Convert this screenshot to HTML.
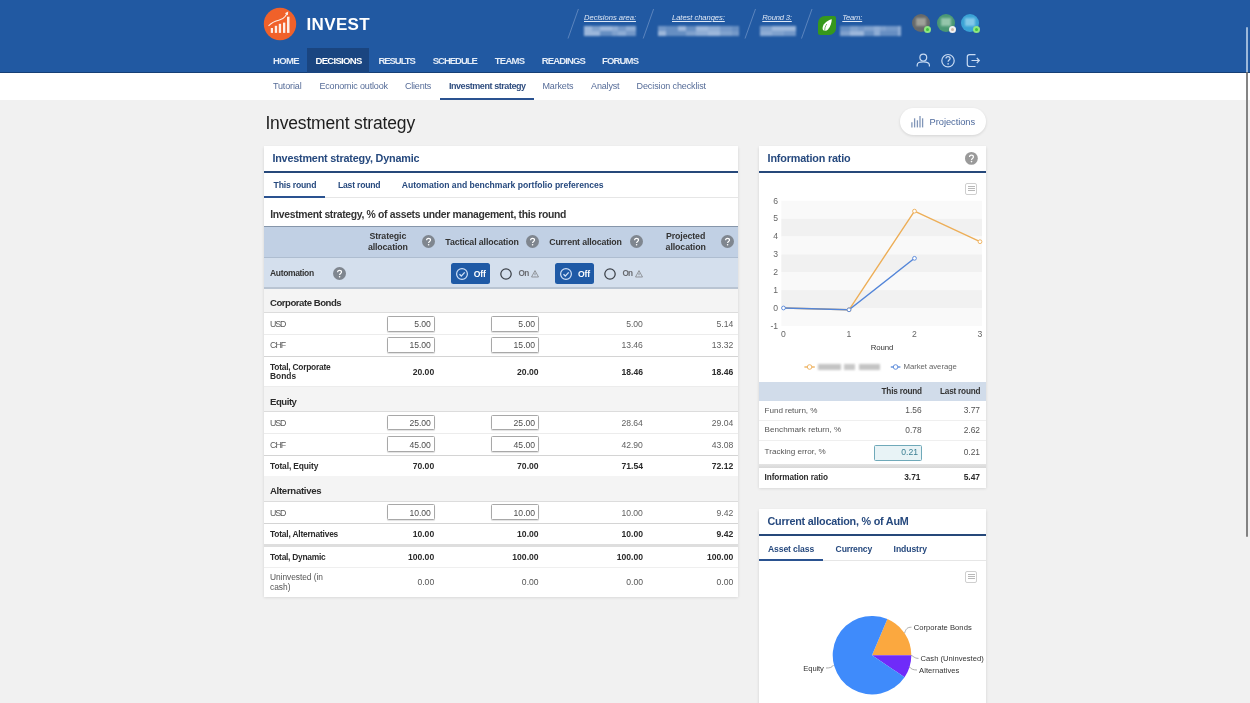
<!DOCTYPE html>
<html><head><meta charset="utf-8"><title>Investment strategy</title>
<style>
html,body{margin:0;padding:0}
body{width:1250px;height:703px;overflow:hidden;position:relative;background:#f1f1f1;font-family:"Liberation Sans",sans-serif}
.t{position:absolute;line-height:1;white-space:nowrap}
.b{position:absolute}
.wrap{position:absolute;left:0;top:0;width:1250px;height:703px;overflow:hidden;will-change:transform}
</style></head><body>
<div class="wrap">
<div class="b" style="left:0px;top:0px;width:1250px;height:72px;background:#2159a2"></div>
<div class="b" style="left:0px;top:72px;width:1250px;height:1px;background:#163f75"></div>
<div class="b" style="left:0px;top:73px;width:1250px;height:27px;background:#fff"></div>
<svg class="b" style="left:263px;top:7px" width="34" height="34" viewBox="0 0 34 34">
<circle cx="17" cy="17" r="16.2" fill="#f0612a"/>
<g fill="#fdeee6"><rect x="7.8" y="21" width="2.2" height="4.9"/><rect x="11.8" y="18.8" width="2.3" height="7.1"/><rect x="15.8" y="16.8" width="2.3" height="9.1"/><rect x="20" y="15.6" width="2.3" height="10.3"/><rect x="24" y="9.7" width="2.5" height="16.2"/></g>
<path d="M5.5 18.8 C9 15.5 11.5 14 15.8 13.2 C19 12.6 20.8 11.5 22.3 9.3 L24.6 5.6" stroke="#fdeee6" stroke-width="1.1" fill="none"/>
<path d="M25.2 4.6 L21.9 6.2 L24.9 8.2 Z" fill="#fdeee6"/>
</svg>
<div class="t" style="top:16.21px;font-size:17px;color:#ffffff;font-weight:bold;letter-spacing:0.350px;left:306.50px;">INVEST</div>
<div class="b" style="left:307px;top:48px;width:62px;height:24.5px;background:#1a4580"></div>
<div class="t" style="top:56.06px;font-size:9.5px;color:#e4ecf7;font-weight:bold;letter-spacing:-0.625px;left:273.00px;">HOME</div>
<div class="t" style="top:56.06px;font-size:9.5px;color:#ffffff;font-weight:bold;letter-spacing:-0.684px;left:315.50px;">DECISIONS</div>
<div class="t" style="top:56.06px;font-size:9.5px;color:#e4ecf7;font-weight:bold;letter-spacing:-1.019px;left:378.40px;">RESULTS</div>
<div class="t" style="top:56.06px;font-size:9.5px;color:#e4ecf7;font-weight:bold;letter-spacing:-1.032px;left:432.80px;">SCHEDULE</div>
<div class="t" style="top:56.06px;font-size:9.5px;color:#e4ecf7;font-weight:bold;letter-spacing:-0.770px;left:494.80px;">TEAMS</div>
<div class="t" style="top:56.06px;font-size:9.5px;color:#e4ecf7;font-weight:bold;letter-spacing:-0.868px;left:541.80px;">READINGS</div>
<div class="t" style="top:56.06px;font-size:9.5px;color:#e4ecf7;font-weight:bold;letter-spacing:-0.827px;left:602.00px;">FORUMS</div>
<svg class="b" style="left:0;top:0" width="1250" height="72"><g stroke="#6f93c6" stroke-width="1" opacity="0.75"><line x1="578.4" y1="9" x2="568" y2="38.5"/><line x1="653.6" y1="9" x2="643.2" y2="38.5"/><line x1="755.5" y1="9" x2="745" y2="38.5"/><line x1="812" y1="9" x2="801.5" y2="38.5"/></g></svg>
<div class="t" style="top:14.07px;font-size:7.6px;color:#dfe8f5;font-style:italic;letter-spacing:-0.025px;left:584.00px;text-decoration:underline;">Decisions area:</div>
<div class="t" style="top:14.07px;font-size:7.6px;color:#dfe8f5;font-style:italic;letter-spacing:-0.057px;left:672.00px;text-decoration:underline;">Latest changes:</div>
<div class="t" style="top:14.07px;font-size:7.6px;color:#dfe8f5;font-style:italic;letter-spacing:-0.168px;left:762.30px;text-decoration:underline;">Round 3:</div>
<div class="t" style="top:14.07px;font-size:7.6px;color:#dfe8f5;font-style:italic;letter-spacing:-0.188px;left:842.30px;text-decoration:underline;">Team:</div>
<div class="b" style="left:0;top:0;width:1250px;height:72px;filter:blur(1px)">
<div class="b" style="left:584px;top:26px;width:8px;height:5px;background:rgba(215,228,246,0.68)"></div>
<div class="b" style="left:584px;top:31px;width:8px;height:5px;background:rgba(215,228,246,0.68)"></div>
<div class="b" style="left:592px;top:26px;width:8px;height:5px;background:rgba(215,228,246,0.52)"></div>
<div class="b" style="left:592px;top:31px;width:8px;height:5px;background:rgba(215,228,246,0.68)"></div>
<div class="b" style="left:600px;top:26px;width:12px;height:5px;background:rgba(215,228,246,0.68)"></div>
<div class="b" style="left:600px;top:31px;width:12px;height:5px;background:rgba(215,228,246,0.38)"></div>
<div class="b" style="left:612px;top:26px;width:6px;height:5px;background:rgba(215,228,246,0.6)"></div>
<div class="b" style="left:612px;top:31px;width:6px;height:5px;background:rgba(215,228,246,0.52)"></div>
<div class="b" style="left:618px;top:26px;width:8px;height:5px;background:rgba(215,228,246,0.45)"></div>
<div class="b" style="left:618px;top:31px;width:8px;height:5px;background:rgba(215,228,246,0.6)"></div>
<div class="b" style="left:626px;top:26px;width:10px;height:5px;background:rgba(215,228,246,0.6)"></div>
<div class="b" style="left:626px;top:31px;width:10px;height:5px;background:rgba(215,228,246,0.45)"></div>
<div class="b" style="left:658.4px;top:26px;width:8.0px;height:5px;background:rgba(215,228,246,0.45)"></div>
<div class="b" style="left:658.4px;top:31px;width:8.0px;height:5px;background:rgba(215,228,246,0.68)"></div>
<div class="b" style="left:666.4px;top:26px;width:12.0px;height:5px;background:rgba(215,228,246,0.38)"></div>
<div class="b" style="left:666.4px;top:31px;width:12.0px;height:5px;background:rgba(215,228,246,0.38)"></div>
<div class="b" style="left:678.4px;top:26px;width:8.0px;height:5px;background:rgba(215,228,246,0.68)"></div>
<div class="b" style="left:678.4px;top:31px;width:8.0px;height:5px;background:rgba(215,228,246,0.38)"></div>
<div class="b" style="left:686.4px;top:26px;width:10.0px;height:5px;background:rgba(215,228,246,0.38)"></div>
<div class="b" style="left:686.4px;top:31px;width:10.0px;height:5px;background:rgba(215,228,246,0.52)"></div>
<div class="b" style="left:696.4px;top:26px;width:12.0px;height:5px;background:rgba(215,228,246,0.68)"></div>
<div class="b" style="left:696.4px;top:31px;width:12.0px;height:5px;background:rgba(215,228,246,0.6)"></div>
<div class="b" style="left:708.4px;top:26px;width:12.0px;height:5px;background:rgba(215,228,246,0.6)"></div>
<div class="b" style="left:708.4px;top:31px;width:12.0px;height:5px;background:rgba(215,228,246,0.68)"></div>
<div class="b" style="left:720.4px;top:26px;width:12.0px;height:5px;background:rgba(215,228,246,0.45)"></div>
<div class="b" style="left:720.4px;top:31px;width:12.0px;height:5px;background:rgba(215,228,246,0.52)"></div>
<div class="b" style="left:732.4px;top:26px;width:6.0px;height:5px;background:rgba(215,228,246,0.38)"></div>
<div class="b" style="left:732.4px;top:31px;width:6.0px;height:5px;background:rgba(215,228,246,0.45)"></div>
<div class="b" style="left:738.4px;top:26px;width:0.8000000000000682px;height:5px;background:rgba(215,228,246,0.45)"></div>
<div class="b" style="left:738.4px;top:31px;width:0.8000000000000682px;height:5px;background:rgba(215,228,246,0.52)"></div>
<div class="b" style="left:760px;top:26px;width:12px;height:5px;background:rgba(215,228,246,0.52)"></div>
<div class="b" style="left:760px;top:31px;width:12px;height:5px;background:rgba(215,228,246,0.6)"></div>
<div class="b" style="left:772px;top:26px;width:12px;height:5px;background:rgba(215,228,246,0.68)"></div>
<div class="b" style="left:772px;top:31px;width:12px;height:5px;background:rgba(215,228,246,0.52)"></div>
<div class="b" style="left:784px;top:26px;width:12px;height:5px;background:rgba(215,228,246,0.68)"></div>
<div class="b" style="left:784px;top:31px;width:12px;height:5px;background:rgba(215,228,246,0.45)"></div>
<div class="b" style="left:840px;top:26px;width:10px;height:5px;background:rgba(215,228,246,0.38)"></div>
<div class="b" style="left:840px;top:31px;width:10px;height:5px;background:rgba(215,228,246,0.52)"></div>
<div class="b" style="left:850px;top:26px;width:8px;height:5px;background:rgba(215,228,246,0.52)"></div>
<div class="b" style="left:850px;top:31px;width:8px;height:5px;background:rgba(215,228,246,0.68)"></div>
<div class="b" style="left:858px;top:26px;width:6px;height:5px;background:rgba(215,228,246,0.45)"></div>
<div class="b" style="left:858px;top:31px;width:6px;height:5px;background:rgba(215,228,246,0.68)"></div>
<div class="b" style="left:864px;top:26px;width:10px;height:5px;background:rgba(215,228,246,0.52)"></div>
<div class="b" style="left:864px;top:31px;width:10px;height:5px;background:rgba(215,228,246,0.38)"></div>
<div class="b" style="left:874px;top:26px;width:6px;height:5px;background:rgba(215,228,246,0.6)"></div>
<div class="b" style="left:874px;top:31px;width:6px;height:5px;background:rgba(215,228,246,0.6)"></div>
<div class="b" style="left:880px;top:26px;width:6px;height:5px;background:rgba(215,228,246,0.52)"></div>
<div class="b" style="left:880px;top:31px;width:6px;height:5px;background:rgba(215,228,246,0.38)"></div>
<div class="b" style="left:886px;top:26px;width:12px;height:5px;background:rgba(215,228,246,0.45)"></div>
<div class="b" style="left:886px;top:31px;width:12px;height:5px;background:rgba(215,228,246,0.38)"></div>
<div class="b" style="left:898px;top:26px;width:3.3999999999999773px;height:5px;background:rgba(215,228,246,0.6)"></div>
<div class="b" style="left:898px;top:31px;width:3.3999999999999773px;height:5px;background:rgba(215,228,246,0.6)"></div>
</div>
<div class="b" style="left:818px;top:16px;width:18px;height:18.5px;background:#36981c;border-radius:7px 2px 7px 2px"></div>
<svg class="b" style="left:818px;top:16px" width="18" height="18.5" viewBox="0 0 18 18.5">
<path d="M13.8 3.2 C8.5 4.5 4.2 8.5 4.6 12.8 C4.9 15.3 8 15.6 10.2 13.2 C12.6 10.5 13.5 6.8 13.8 3.2 Z" fill="#ffffff"/>
<path d="M6.8 14.8 C6.6 12.5 7.2 10.2 8.8 8" stroke="#3d9b22" stroke-width="0.7" fill="none"/>
</svg>
<div class="b" style="left:912px;top:14px;width:18px;height:18px;border-radius:50%;background:#66696a"></div>
<div class="b" style="left:916px;top:18px;width:10px;height:8px;background:#a3a49c;opacity:0.95;filter:blur(1px)"></div>
<div class="b" style="left:923.5px;top:25.5px;width:7px;height:7px;border-radius:50%;background:#8ee680"></div>
<div class="b" style="left:925.5px;top:27.5px;width:3px;height:3px;border-radius:50%;background:#3fc43f"></div>
<div class="b" style="left:937px;top:14px;width:18px;height:18px;border-radius:50%;background:#4a9774"></div>
<div class="b" style="left:941px;top:18px;width:10px;height:8px;background:#98c9ae;opacity:0.95;filter:blur(1px)"></div>
<div class="b" style="left:948.5px;top:25.5px;width:7px;height:7px;border-radius:50%;background:#f0f0f0"></div>
<div class="b" style="left:950.5px;top:27.5px;width:3px;height:3px;border-radius:50%;background:#cdb6a6"></div>
<div class="b" style="left:961px;top:14px;width:18px;height:18px;border-radius:50%;background:#3aa2d5"></div>
<div class="b" style="left:965px;top:18px;width:10px;height:8px;background:#86cbea;opacity:0.95;filter:blur(1px)"></div>
<div class="b" style="left:972.5px;top:25.5px;width:7px;height:7px;border-radius:50%;background:#8ee680"></div>
<div class="b" style="left:974.5px;top:27.5px;width:3px;height:3px;border-radius:50%;background:#3fc43f"></div>
<svg class="b" style="left:910px;top:50px" width="75" height="20" viewBox="910 50 75 20">
<g stroke="#c9dbf3" stroke-width="1.2" fill="none">
<circle cx="923.3" cy="57.6" r="3.4"/>
<path d="M917.2 66.5 V65 C917.2 62.8 919.5 61.8 923.3 61.8 C927.1 61.8 929.4 62.8 929.4 65 V66.5"/>
<circle cx="948" cy="60.7" r="6.2"/>
<path d="M975.5 54.6 H969.5 Q967.3 54.6 967.3 56.8 V64.3 Q967.3 66.5 969.5 66.5 H975.5"/>
<path d="M971.5 60.5 H979.3 M976.8 58 L979.3 60.5 L976.8 63"/>
</g>
<path d="M946 58.6 C946 57.2 947 56.6 948 56.6 C949.1 56.6 950.1 57.3 950.1 58.5 C950.1 60 948.1 60.1 948.1 61.8" stroke="#c9dbf3" stroke-width="1.2" fill="none"/>
<circle cx="948.1" cy="63.9" r="0.8" fill="#c9dbf3"/>
</svg>
<div class="t" style="top:81.68px;font-size:9px;color:#566c98;letter-spacing:-0.147px;left:273.00px;">Tutorial</div>
<div class="t" style="top:81.68px;font-size:9px;color:#566c98;letter-spacing:-0.159px;left:319.40px;">Economic outlook</div>
<div class="t" style="top:81.68px;font-size:9px;color:#566c98;letter-spacing:-0.216px;left:405.00px;">Clients</div>
<div class="t" style="top:81.68px;font-size:9px;color:#2f4d7f;font-weight:bold;letter-spacing:-0.433px;left:448.90px;">Investment strategy</div>
<div class="t" style="top:81.68px;font-size:9px;color:#566c98;letter-spacing:-0.158px;left:542.50px;">Markets</div>
<div class="t" style="top:81.68px;font-size:9px;color:#566c98;letter-spacing:-0.173px;left:591.10px;">Analyst</div>
<div class="t" style="top:81.68px;font-size:9px;color:#566c98;letter-spacing:-0.118px;left:636.60px;">Decision checklist</div>
<div class="b" style="left:440px;top:98px;width:94px;height:2px;background:#2a5290"></div>
<div class="t" style="top:114.59px;font-size:17.5px;color:#1e1e1e;letter-spacing:-0.164px;left:265.40px;">Investment strategy</div>
<div class="b" style="left:900px;top:108px;width:86px;height:27px;background:#fff;border-radius:14px;box-shadow:0 1px 3px rgba(0,0,0,0.12)"></div>
<svg class="b" style="left:910px;top:115px" width="14" height="13" viewBox="910 115 14 13">
<g stroke="#8196b8" stroke-width="1.3"><line x1="911.9" y1="127.4" x2="911.9" y2="122.3"/><line x1="914.6" y1="127.4" x2="914.6" y2="118.3"/><line x1="917.4" y1="127.4" x2="917.4" y2="120.3"/><line x1="920" y1="127.4" x2="920" y2="116"/><line x1="922.6" y1="127.4" x2="922.6" y2="118.3"/></g></svg>
<div class="t" style="top:117.63px;font-size:9.3px;color:#4e6a9c;letter-spacing:-0.046px;left:929.60px;">Projections</div>
<div class="b" style="left:264px;top:146px;width:474px;height:451px;background:#fff;box-shadow:0 0.5px 3px rgba(0,0,0,0.13)"></div>
<div class="t" style="top:153.16px;font-size:10.8px;color:#26497e;font-weight:bold;letter-spacing:-0.191px;left:272.40px;">Investment strategy, Dynamic</div>
<div class="b" style="left:264px;top:171px;width:474px;height:2px;background:#26487a"></div>
<div class="t" style="top:180.72px;font-size:8.6px;color:#26497e;font-weight:bold;letter-spacing:-0.173px;left:273.60px;">This round</div>
<div class="t" style="top:180.72px;font-size:8.6px;color:#26497e;font-weight:bold;letter-spacing:-0.203px;left:338.00px;">Last round</div>
<div class="t" style="top:180.72px;font-size:8.6px;color:#26497e;font-weight:bold;letter-spacing:-0.005px;left:401.80px;">Automation and benchmark portfolio preferences</div>
<div class="b" style="left:264px;top:197px;width:474px;height:1px;background:#e6e6e6"></div>
<div class="b" style="left:264px;top:196px;width:60.5px;height:2px;background:#2a5290"></div>
<div class="t" style="top:209.50px;font-size:10.4px;color:#333;font-weight:bold;letter-spacing:-0.323px;left:270.20px;">Investment strategy, % of assets under management, this round</div>
<div class="b" style="left:264px;top:226px;width:474px;height:1px;background:#8696aa"></div>
<div class="b" style="left:264px;top:227px;width:474px;height:30px;background:#c1d0e4"></div>
<div class="b" style="left:264px;top:257px;width:474px;height:1px;background:#aebdd0"></div>
<div class="b" style="left:264px;top:258px;width:474px;height:29px;background:#d4dfed"></div>
<div class="b" style="left:264px;top:287px;width:474px;height:2px;background:#b9c4d2"></div>
<div class="t" style="top:232.25px;font-size:8.8px;color:#333;font-weight:bold;letter-spacing:-0.084px;left:369.40px;">Strategic</div>
<div class="t" style="top:242.95px;font-size:8.8px;color:#333;font-weight:bold;letter-spacing:-0.117px;left:367.90px;">allocation</div>
<div class="t" style="top:237.55px;font-size:8.8px;color:#333;font-weight:bold;letter-spacing:-0.118px;left:445.30px;">Tactical allocation</div>
<div class="t" style="top:237.55px;font-size:8.8px;color:#333;font-weight:bold;letter-spacing:-0.155px;left:549.20px;">Current allocation</div>
<div class="t" style="top:232.25px;font-size:8.8px;color:#333;font-weight:bold;letter-spacing:-0.100px;left:666.00px;">Projected</div>
<div class="t" style="top:242.95px;font-size:8.8px;color:#333;font-weight:bold;letter-spacing:-0.097px;left:665.60px;">allocation</div>
<div class="t" style="top:269.10px;font-size:8.5px;color:#333;font-weight:bold;letter-spacing:-0.342px;left:270.00px;">Automation</div>
<svg class="b" style="left:421.8px;top:235.1px" width="13.0" height="13.0" viewBox="-6.5 -6.5 13.0 13.0"><circle r="6.5" fill="#7f868f"/><path d="M-1.9 -1.3 C-1.9 -2.6 -1 -3.2 0 -3.2 C1.1 -3.2 2 -2.5 2 -1.4 C2 0 0.1 0.1 0.1 1.5" stroke="#fff" stroke-width="1.2" fill="none"/><circle cx="0.1" cy="3.2" r="0.8" fill="#fff"/></svg>
<svg class="b" style="left:526.1px;top:235.1px" width="13.0" height="13.0" viewBox="-6.5 -6.5 13.0 13.0"><circle r="6.5" fill="#7f868f"/><path d="M-1.9 -1.3 C-1.9 -2.6 -1 -3.2 0 -3.2 C1.1 -3.2 2 -2.5 2 -1.4 C2 0 0.1 0.1 0.1 1.5" stroke="#fff" stroke-width="1.2" fill="none"/><circle cx="0.1" cy="3.2" r="0.8" fill="#fff"/></svg>
<svg class="b" style="left:630.0px;top:235.1px" width="13.0" height="13.0" viewBox="-6.5 -6.5 13.0 13.0"><circle r="6.5" fill="#7f868f"/><path d="M-1.9 -1.3 C-1.9 -2.6 -1 -3.2 0 -3.2 C1.1 -3.2 2 -2.5 2 -1.4 C2 0 0.1 0.1 0.1 1.5" stroke="#fff" stroke-width="1.2" fill="none"/><circle cx="0.1" cy="3.2" r="0.8" fill="#fff"/></svg>
<svg class="b" style="left:720.5px;top:235.1px" width="13.0" height="13.0" viewBox="-6.5 -6.5 13.0 13.0"><circle r="6.5" fill="#7f868f"/><path d="M-1.9 -1.3 C-1.9 -2.6 -1 -3.2 0 -3.2 C1.1 -3.2 2 -2.5 2 -1.4 C2 0 0.1 0.1 0.1 1.5" stroke="#fff" stroke-width="1.2" fill="none"/><circle cx="0.1" cy="3.2" r="0.8" fill="#fff"/></svg>
<svg class="b" style="left:332.7px;top:266.5px" width="13.0" height="13.0" viewBox="-6.5 -6.5 13.0 13.0"><circle r="6.5" fill="#7f868f"/><path d="M-1.9 -1.3 C-1.9 -2.6 -1 -3.2 0 -3.2 C1.1 -3.2 2 -2.5 2 -1.4 C2 0 0.1 0.1 0.1 1.5" stroke="#fff" stroke-width="1.2" fill="none"/><circle cx="0.1" cy="3.2" r="0.8" fill="#fff"/></svg>
<div class="b" style="left:450.6px;top:263px;width:39.0px;height:21px;background:#1f5aa6;border-radius:2.5px"></div>
<svg class="b" style="left:455.20000000000005px;top:266.7px" width="14" height="14" viewBox="-7 -7 14 14"><circle r="5.4" stroke="#cfe0f7" stroke-width="1.2" fill="none"/><path d="M-2.5 0.3 L-0.7 2.1 L2.7 -1.6" stroke="#cfe0f7" stroke-width="1.35" fill="none"/></svg>
<div class="t" style="top:270.12px;font-size:8.6px;color:#ffffff;font-weight:bold;letter-spacing:-0.139px;left:473.80px;">Off</div>
<svg class="b" style="left:499.2px;top:266.8px" width="14" height="14" viewBox="-7 -7 14 14"><circle r="5.2" stroke="#3a3f47" stroke-width="1.25" fill="none"/></svg>
<div class="t" style="top:270.46px;font-size:8.2px;color:#67696e;font-weight:bold;letter-spacing:-0.694px;left:518.60px;">On</div>
<svg class="b" style="left:530.8000000000001px;top:269.6px" width="8" height="8" viewBox="0 0 8 8"><path d="M4 0.6 L7.5 7 H0.5 Z" stroke="#85888d" stroke-width="0.85" fill="none" stroke-linejoin="round"/><line x1="4" y1="2.8" x2="4" y2="5" stroke="#85888d" stroke-width="0.9"/><circle cx="4" cy="6" r="0.45" fill="#85888d"/></svg>
<div class="b" style="left:554.7px;top:263px;width:39.0px;height:21px;background:#1f5aa6;border-radius:2.5px"></div>
<svg class="b" style="left:559.3000000000001px;top:266.7px" width="14" height="14" viewBox="-7 -7 14 14"><circle r="5.4" stroke="#cfe0f7" stroke-width="1.2" fill="none"/><path d="M-2.5 0.3 L-0.7 2.1 L2.7 -1.6" stroke="#cfe0f7" stroke-width="1.35" fill="none"/></svg>
<div class="t" style="top:270.12px;font-size:8.6px;color:#ffffff;font-weight:bold;letter-spacing:-0.139px;left:577.90px;">Off</div>
<svg class="b" style="left:603.4px;top:266.8px" width="14" height="14" viewBox="-7 -7 14 14"><circle r="5.2" stroke="#3a3f47" stroke-width="1.25" fill="none"/></svg>
<div class="t" style="top:270.46px;font-size:8.2px;color:#67696e;font-weight:bold;letter-spacing:-0.694px;left:622.40px;">On</div>
<svg class="b" style="left:634.6px;top:269.6px" width="8" height="8" viewBox="0 0 8 8"><path d="M4 0.6 L7.5 7 H0.5 Z" stroke="#85888d" stroke-width="0.85" fill="none" stroke-linejoin="round"/><line x1="4" y1="2.8" x2="4" y2="5" stroke="#85888d" stroke-width="0.9"/><circle cx="4" cy="6" r="0.45" fill="#85888d"/></svg>
<div class="b" style="left:264px;top:289px;width:474px;height:23px;background:#f4f4f4"></div>
<div class="b" style="left:264px;top:312px;width:474px;height:1px;background:#dcdcdc"></div>
<div class="t" style="top:297.97px;font-size:9.6px;color:#2b2b2b;font-weight:bold;letter-spacing:-0.480px;left:270.00px;">Corporate Bonds</div>
<div class="t" style="top:319.75px;font-size:8.8px;color:#5a5a5a;letter-spacing:-1.093px;left:270.00px;">USD</div>
<div class="b" style="left:387.1px;top:315.7px;width:47.60000000000002px;height:16.0px;background:#fff;border:1px solid #a8a8a8;border-radius:1.5px;box-sizing:border-box;box-shadow:0 1px 1px rgba(0,0,0,0.12)"></div>
<div class="t" style="top:319.92px;font-size:8.6px;color:#4c4c4c;left:414.16px;">5.00</div>
<div class="b" style="left:491.3px;top:315.7px;width:47.599999999999966px;height:16.0px;background:#fff;border:1px solid #a8a8a8;border-radius:1.5px;box-sizing:border-box;box-shadow:0 1px 1px rgba(0,0,0,0.12)"></div>
<div class="t" style="top:319.92px;font-size:8.6px;color:#4c4c4c;left:518.36px;">5.00</div>
<div class="t" style="top:319.92px;font-size:8.6px;color:#606060;left:626.16px;">5.00</div>
<div class="t" style="top:319.92px;font-size:8.6px;color:#606060;left:716.56px;">5.14</div>
<div class="b" style="left:264px;top:334px;width:474px;height:1px;background:#ececec"></div>
<div class="t" style="top:340.95px;font-size:8.8px;color:#5a5a5a;letter-spacing:-0.929px;left:270.00px;">CHF</div>
<div class="b" style="left:387.1px;top:337.2px;width:47.60000000000002px;height:15.600000000000023px;background:#fff;border:1px solid #a8a8a8;border-radius:1.5px;box-sizing:border-box;box-shadow:0 1px 1px rgba(0,0,0,0.12)"></div>
<div class="t" style="top:341.12px;font-size:8.6px;color:#4c4c4c;left:409.38px;">15.00</div>
<div class="b" style="left:491.3px;top:337.2px;width:47.599999999999966px;height:15.600000000000023px;background:#fff;border:1px solid #a8a8a8;border-radius:1.5px;box-sizing:border-box;box-shadow:0 1px 1px rgba(0,0,0,0.12)"></div>
<div class="t" style="top:341.12px;font-size:8.6px;color:#4c4c4c;left:513.58px;">15.00</div>
<div class="t" style="top:341.12px;font-size:8.6px;color:#606060;left:621.38px;">13.46</div>
<div class="t" style="top:341.12px;font-size:8.6px;color:#606060;left:711.78px;">13.32</div>
<div class="b" style="left:264px;top:355.5px;width:474px;height:1.5px;background:#d4d4d4"></div>
<div class="t" style="top:362.89px;font-size:8.4px;color:#2b2b2b;font-weight:bold;letter-spacing:-0.228px;left:270.00px;">Total, Corporate</div>
<div class="t" style="top:372.09px;font-size:8.4px;color:#2b2b2b;font-weight:bold;left:270.00px;">Bonds</div>
<div class="t" style="top:367.92px;font-size:8.6px;color:#2b2b2b;font-weight:bold;left:412.68px;">20.00</div>
<div class="t" style="top:367.92px;font-size:8.6px;color:#2b2b2b;font-weight:bold;left:517.08px;">20.00</div>
<div class="t" style="top:367.92px;font-size:8.6px;color:#2b2b2b;font-weight:bold;left:621.48px;">18.46</div>
<div class="t" style="top:367.92px;font-size:8.6px;color:#2b2b2b;font-weight:bold;left:711.78px;">18.46</div>
<div class="b" style="left:264px;top:386px;width:474px;height:1px;background:#ececec"></div>
<div class="b" style="left:264px;top:387px;width:474px;height:24px;background:#f4f4f4"></div>
<div class="b" style="left:264px;top:411px;width:474px;height:1px;background:#dcdcdc"></div>
<div class="t" style="top:396.87px;font-size:9.6px;color:#2b2b2b;font-weight:bold;letter-spacing:-0.472px;left:270.00px;">Equity</div>
<div class="t" style="top:418.75px;font-size:8.8px;color:#5a5a5a;letter-spacing:-1.093px;left:270.00px;">USD</div>
<div class="b" style="left:387.1px;top:414.6px;width:47.60000000000002px;height:15.799999999999955px;background:#fff;border:1px solid #a8a8a8;border-radius:1.5px;box-sizing:border-box;box-shadow:0 1px 1px rgba(0,0,0,0.12)"></div>
<div class="t" style="top:418.92px;font-size:8.6px;color:#4c4c4c;left:409.38px;">25.00</div>
<div class="b" style="left:491.3px;top:414.6px;width:47.599999999999966px;height:15.799999999999955px;background:#fff;border:1px solid #a8a8a8;border-radius:1.5px;box-sizing:border-box;box-shadow:0 1px 1px rgba(0,0,0,0.12)"></div>
<div class="t" style="top:418.92px;font-size:8.6px;color:#4c4c4c;left:513.58px;">25.00</div>
<div class="t" style="top:418.92px;font-size:8.6px;color:#606060;left:621.38px;">28.64</div>
<div class="t" style="top:418.92px;font-size:8.6px;color:#606060;left:711.78px;">29.04</div>
<div class="b" style="left:264px;top:433px;width:474px;height:1px;background:#ececec"></div>
<div class="t" style="top:440.55px;font-size:8.8px;color:#5a5a5a;letter-spacing:-0.929px;left:270.00px;">CHF</div>
<div class="b" style="left:387.1px;top:436.3px;width:47.60000000000002px;height:15.699999999999989px;background:#fff;border:1px solid #a8a8a8;border-radius:1.5px;box-sizing:border-box;box-shadow:0 1px 1px rgba(0,0,0,0.12)"></div>
<div class="t" style="top:440.72px;font-size:8.6px;color:#4c4c4c;left:409.38px;">45.00</div>
<div class="b" style="left:491.3px;top:436.3px;width:47.599999999999966px;height:15.699999999999989px;background:#fff;border:1px solid #a8a8a8;border-radius:1.5px;box-sizing:border-box;box-shadow:0 1px 1px rgba(0,0,0,0.12)"></div>
<div class="t" style="top:440.72px;font-size:8.6px;color:#4c4c4c;left:513.58px;">45.00</div>
<div class="t" style="top:440.72px;font-size:8.6px;color:#606060;left:621.38px;">42.90</div>
<div class="t" style="top:440.72px;font-size:8.6px;color:#606060;left:711.78px;">43.08</div>
<div class="b" style="left:264px;top:454.5px;width:474px;height:1.5px;background:#d4d4d4"></div>
<div class="t" style="top:462.19px;font-size:8.4px;color:#2b2b2b;font-weight:bold;letter-spacing:-0.098px;left:270.00px;">Total, Equity</div>
<div class="t" style="top:462.02px;font-size:8.6px;color:#2b2b2b;font-weight:bold;left:412.68px;">70.00</div>
<div class="t" style="top:462.02px;font-size:8.6px;color:#2b2b2b;font-weight:bold;left:517.08px;">70.00</div>
<div class="t" style="top:462.02px;font-size:8.6px;color:#2b2b2b;font-weight:bold;left:621.48px;">71.54</div>
<div class="t" style="top:462.02px;font-size:8.6px;color:#2b2b2b;font-weight:bold;left:711.78px;">72.12</div>
<div class="b" style="left:264px;top:475.5px;width:474px;height:1.0px;background:#ececec"></div>
<div class="b" style="left:264px;top:476px;width:474px;height:25px;background:#f4f4f4"></div>
<div class="b" style="left:264px;top:501px;width:474px;height:1px;background:#dcdcdc"></div>
<div class="t" style="top:485.87px;font-size:9.6px;color:#2b2b2b;font-weight:bold;letter-spacing:-0.305px;left:270.00px;">Alternatives</div>
<div class="t" style="top:508.55px;font-size:8.8px;color:#5a5a5a;letter-spacing:-1.093px;left:270.00px;">USD</div>
<div class="b" style="left:387.1px;top:504.2px;width:47.60000000000002px;height:16.19999999999999px;background:#fff;border:1px solid #a8a8a8;border-radius:1.5px;box-sizing:border-box;box-shadow:0 1px 1px rgba(0,0,0,0.12)"></div>
<div class="t" style="top:508.72px;font-size:8.6px;color:#4c4c4c;left:409.38px;">10.00</div>
<div class="b" style="left:491.3px;top:504.2px;width:47.599999999999966px;height:16.19999999999999px;background:#fff;border:1px solid #a8a8a8;border-radius:1.5px;box-sizing:border-box;box-shadow:0 1px 1px rgba(0,0,0,0.12)"></div>
<div class="t" style="top:508.72px;font-size:8.6px;color:#4c4c4c;left:513.58px;">10.00</div>
<div class="t" style="top:508.72px;font-size:8.6px;color:#606060;left:621.38px;">10.00</div>
<div class="t" style="top:508.72px;font-size:8.6px;color:#606060;left:716.56px;">9.42</div>
<div class="b" style="left:264px;top:523px;width:474px;height:1px;background:#d4d4d4"></div>
<div class="t" style="top:530.09px;font-size:8.4px;color:#2b2b2b;font-weight:bold;letter-spacing:-0.189px;left:270.00px;">Total, Alternatives</div>
<div class="t" style="top:529.92px;font-size:8.6px;color:#2b2b2b;font-weight:bold;left:412.68px;">10.00</div>
<div class="t" style="top:529.92px;font-size:8.6px;color:#2b2b2b;font-weight:bold;left:517.08px;">10.00</div>
<div class="t" style="top:529.92px;font-size:8.6px;color:#2b2b2b;font-weight:bold;left:621.48px;">10.00</div>
<div class="t" style="top:529.92px;font-size:8.6px;color:#2b2b2b;font-weight:bold;left:716.56px;">9.42</div>
<div class="b" style="left:264px;top:544px;width:474px;height:3px;background:#dedede"></div>
<div class="t" style="top:553.09px;font-size:8.4px;color:#2b2b2b;font-weight:bold;letter-spacing:-0.252px;left:270.00px;">Total, Dynamic</div>
<div class="t" style="top:552.92px;font-size:8.6px;color:#2b2b2b;font-weight:bold;left:407.90px;">100.00</div>
<div class="t" style="top:552.92px;font-size:8.6px;color:#2b2b2b;font-weight:bold;left:512.30px;">100.00</div>
<div class="t" style="top:552.92px;font-size:8.6px;color:#2b2b2b;font-weight:bold;left:616.70px;">100.00</div>
<div class="t" style="top:552.92px;font-size:8.6px;color:#2b2b2b;font-weight:bold;left:707.00px;">100.00</div>
<div class="b" style="left:264px;top:567px;width:474px;height:1px;background:#efefef"></div>
<div class="t" style="top:572.89px;font-size:8.4px;color:#555;letter-spacing:-0.050px;left:270.00px;">Uninvested (in</div>
<div class="t" style="top:583.09px;font-size:8.4px;color:#555;left:270.00px;">cash)</div>
<div class="t" style="top:577.52px;font-size:8.6px;color:#555;left:417.46px;">0.00</div>
<div class="t" style="top:577.52px;font-size:8.6px;color:#555;left:521.86px;">0.00</div>
<div class="t" style="top:577.52px;font-size:8.6px;color:#555;left:626.26px;">0.00</div>
<div class="t" style="top:577.52px;font-size:8.6px;color:#555;left:716.56px;">0.00</div>
<div class="b" style="left:759px;top:146px;width:226.5px;height:342px;background:#fff;box-shadow:0 0.5px 3px rgba(0,0,0,0.13)"></div>
<div class="t" style="top:152.76px;font-size:10.8px;color:#26497e;font-weight:bold;letter-spacing:-0.171px;left:767.60px;">Information ratio</div>
<svg class="b" style="left:965.0px;top:151.79999999999998px" width="12.8" height="12.8" viewBox="-6.4 -6.4 12.8 12.8"><circle r="6.4" fill="#9a9a9a"/><path d="M-1.9 -1.3 C-1.9 -2.6 -1 -3.2 0 -3.2 C1.1 -3.2 2 -2.5 2 -1.4 C2 0 0.1 0.1 0.1 1.5" stroke="#fff" stroke-width="1.2" fill="none"/><circle cx="0.1" cy="3.2" r="0.8" fill="#fff"/></svg>
<div class="b" style="left:759px;top:171px;width:226.5px;height:2px;background:#26487a"></div>
<div class="b" style="left:965.2px;top:183px;width:12px;height:12px;border:1px solid #cfcfcf;border-radius:2px;box-sizing:border-box;background:#fff"></div>
<div class="b" style="left:968.2px;top:186.4px;width:6.399999999999977px;height:0.799999999999983px;background:#b8b8b8"></div>
<div class="b" style="left:968.2px;top:188.4px;width:6.399999999999977px;height:0.799999999999983px;background:#b8b8b8"></div>
<div class="b" style="left:968.2px;top:190.4px;width:6.399999999999977px;height:0.799999999999983px;background:#b8b8b8"></div>
<svg class="b" style="left:0;top:0" width="1250" height="703"><rect x="781.3" y="200.78" width="200.70000000000005" height="17.87" fill="#f9f9f9"/><rect x="781.3" y="218.65" width="200.70000000000005" height="17.87" fill="#f1f1f1"/><rect x="781.3" y="236.52" width="200.70000000000005" height="17.87" fill="#f9f9f9"/><rect x="781.3" y="254.39" width="200.70000000000005" height="17.87" fill="#f1f1f1"/><rect x="781.3" y="272.26" width="200.70000000000005" height="17.87" fill="#f9f9f9"/><rect x="781.3" y="290.13" width="200.70000000000005" height="17.87" fill="#f1f1f1"/><rect x="781.3" y="308.00" width="200.70000000000005" height="17.87" fill="#f9f9f9"/><polyline points="783.5,308.00 849.0,309.79 914.5,211.14 980.0,241.70" stroke="#edae57" stroke-width="1.4" fill="none"/><polyline points="783.5,308.00 849.0,309.79 914.5,258.32" stroke="#5385d8" stroke-width="1.4" fill="none"/><circle cx="849.0" cy="309.79" r="1.9" fill="#fff" stroke="#edae57" stroke-width="0.9"/><circle cx="914.5" cy="211.14" r="1.9" fill="#fff" stroke="#edae57" stroke-width="0.9"/><circle cx="980.0" cy="241.70" r="1.9" fill="#fff" stroke="#edae57" stroke-width="0.9"/><circle cx="783.5" cy="308.00" r="1.9" fill="#fff" stroke="#5385d8" stroke-width="0.9"/><circle cx="849.0" cy="309.79" r="1.9" fill="#fff" stroke="#5385d8" stroke-width="0.9"/><circle cx="914.5" cy="258.32" r="1.9" fill="#fff" stroke="#5385d8" stroke-width="0.9"/><line x1="804.4" y1="367" x2="814.8" y2="367" stroke="#edae57" stroke-width="1.3"/><circle cx="809.6" cy="367" r="2.3" fill="#fff" stroke="#edae57" stroke-width="0.9"/><line x1="890.8" y1="367" x2="900.4" y2="367" stroke="#5385d8" stroke-width="1.3"/><circle cx="895.6" cy="367" r="2.3" fill="#fff" stroke="#5385d8" stroke-width="0.9"/></svg>
<div class="t" style="top:196.60px;font-size:8.6px;color:#666;left:773.32px;">6</div>
<div class="t" style="top:214.47px;font-size:8.6px;color:#666;left:773.32px;">5</div>
<div class="t" style="top:232.34px;font-size:8.6px;color:#666;left:773.32px;">4</div>
<div class="t" style="top:250.21px;font-size:8.6px;color:#666;left:773.32px;">3</div>
<div class="t" style="top:268.08px;font-size:8.6px;color:#666;left:773.32px;">2</div>
<div class="t" style="top:285.95px;font-size:8.6px;color:#666;left:773.32px;">1</div>
<div class="t" style="top:303.82px;font-size:8.6px;color:#666;left:773.32px;">0</div>
<div class="t" style="top:321.69px;font-size:8.6px;color:#666;left:770.45px;">-1</div>
<div class="t" style="top:330.42px;font-size:8.6px;color:#666;left:781.11px;">0</div>
<div class="t" style="top:330.42px;font-size:8.6px;color:#666;left:846.61px;">1</div>
<div class="t" style="top:330.42px;font-size:8.6px;color:#666;left:912.11px;">2</div>
<div class="t" style="top:330.42px;font-size:8.6px;color:#666;left:977.61px;">3</div>
<div class="t" style="top:344.40px;font-size:7.8px;color:#333;letter-spacing:-0.117px;left:870.80px;">Round</div>
<div class="b" style="left:0;top:0;width:1250px;height:703px;filter:blur(1px)">
<div class="b" style="left:817.5px;top:364.3px;width:23.0px;height:5.399999999999977px;background:#c4c4c4"></div>
<div class="b" style="left:843.5px;top:364.3px;width:11.5px;height:5.399999999999977px;background:#c8c8c8"></div>
<div class="b" style="left:858.5px;top:364.3px;width:21.5px;height:5.399999999999977px;background:#c4c4c4"></div>
</div>
<div class="t" style="top:363.20px;font-size:7.8px;color:#666;letter-spacing:-0.078px;left:903.60px;">Market average</div>
<div class="b" style="left:759px;top:382px;width:226.5px;height:18.5px;background:#d1dcea"></div>
<div class="t" style="top:387.66px;font-size:8.2px;color:#333;font-weight:bold;letter-spacing:-0.186px;left:881.50px;">This round</div>
<div class="t" style="top:387.66px;font-size:8.2px;color:#333;font-weight:bold;letter-spacing:-0.197px;left:940.00px;">Last round</div>
<div class="b" style="left:759px;top:420px;width:226.5px;height:1px;background:#efefef"></div>
<div class="b" style="left:759px;top:439.5px;width:226.5px;height:1.0px;background:#efefef"></div>
<div class="b" style="left:759px;top:464px;width:226.5px;height:3.5px;background:linear-gradient(#e4e4e4,#d8d8d8)"></div>
<div class="t" style="top:406.54px;font-size:8.1px;color:#555;letter-spacing:-0.055px;left:764.60px;">Fund return, %</div>
<div class="t" style="top:406.29px;font-size:8.4px;color:#555;left:905.35px;">1.56</div>
<div class="t" style="top:406.29px;font-size:8.4px;color:#555;left:963.65px;">3.77</div>
<div class="t" style="top:426.14px;font-size:8.1px;color:#555;letter-spacing:0.038px;left:764.60px;">Benchmark return, %</div>
<div class="t" style="top:425.89px;font-size:8.4px;color:#555;left:905.35px;">0.78</div>
<div class="t" style="top:425.89px;font-size:8.4px;color:#555;left:963.65px;">2.62</div>
<div class="t" style="top:448.14px;font-size:8.1px;color:#555;letter-spacing:-0.016px;left:764.60px;">Tracking error, %</div>
<div class="b" style="left:874px;top:444.5px;width:48px;height:16.0px;background:#e8f3f6;border:1px solid #6fa9b9;border-radius:1.5px;box-sizing:border-box"></div>
<div class="t" style="top:447.72px;font-size:8.6px;color:#3b7f92;left:901.26px;">0.21</div>
<div class="t" style="top:447.89px;font-size:8.4px;color:#555;left:963.65px;">0.21</div>
<div class="t" style="top:473.66px;font-size:8.2px;color:#2b2b2b;font-weight:bold;letter-spacing:-0.103px;left:764.60px;">Information ratio</div>
<div class="t" style="top:473.49px;font-size:8.4px;color:#2b2b2b;font-weight:bold;left:904.15px;">3.71</div>
<div class="t" style="top:473.49px;font-size:8.4px;color:#2b2b2b;font-weight:bold;left:963.65px;">5.47</div>
<div class="b" style="left:759px;top:508.5px;width:226.5px;height:201.5px;background:#fff;box-shadow:0 0.5px 3px rgba(0,0,0,0.13)"></div>
<div class="t" style="top:516.36px;font-size:10.8px;color:#26497e;font-weight:bold;letter-spacing:-0.218px;left:767.50px;">Current allocation, % of AuM</div>
<div class="b" style="left:759px;top:534px;width:226.5px;height:2px;background:#26487a"></div>
<div class="t" style="top:544.52px;font-size:8.6px;color:#26497e;font-weight:bold;letter-spacing:-0.112px;left:768.00px;">Asset class</div>
<div class="t" style="top:544.52px;font-size:8.6px;color:#26497e;font-weight:bold;letter-spacing:-0.157px;left:835.60px;">Currency</div>
<div class="t" style="top:544.52px;font-size:8.6px;color:#26497e;font-weight:bold;letter-spacing:-0.078px;left:893.60px;">Industry</div>
<div class="b" style="left:759px;top:560px;width:226.5px;height:1px;background:#e6e6e6"></div>
<div class="b" style="left:759px;top:558.8px;width:63.60000000000002px;height:1.8000000000000682px;background:#2a5290"></div>
<div class="b" style="left:965.3px;top:571px;width:12px;height:12px;border:1px solid #cfcfcf;border-radius:2px;box-sizing:border-box;background:#fff"></div>
<div class="b" style="left:968.3px;top:574.4px;width:6.399999999999977px;height:0.8000000000000682px;background:#b8b8b8"></div>
<div class="b" style="left:968.3px;top:576.4px;width:6.399999999999977px;height:0.8000000000000682px;background:#b8b8b8"></div>
<div class="b" style="left:968.3px;top:578.4px;width:6.399999999999977px;height:0.8000000000000682px;background:#b8b8b8"></div>
<svg class="b" style="left:0;top:0" width="1250" height="703"><path d="M872 655.2 L887.36 619.02 A39.3 39.3 0 0 1 911.30 655.20 Z" fill="#fba83f"/><path d="M872 655.2 L911.30 655.20 A39.3 39.3 0 0 1 904.58 677.18 Z" fill="#6f2bf9"/><path d="M872 655.2 L904.58 677.18 A39.3 39.3 0 1 1 887.36 619.02 Z" fill="#3f8bfb"/><g stroke="#999" stroke-width="0.8" fill="none"><path d="M904.6 633 C906 629 907 627.2 911.5 627.2"/><path d="M911 655.5 C913 655.5 914 658.4 918.5 658.4"/><path d="M909 666.5 C911 669 913 670 917 670"/><path d="M833.5 665 C832 667.5 830 668 826 668"/></g></svg>
<div class="t" style="top:624.27px;font-size:7.6px;color:#333;letter-spacing:0.043px;left:913.70px;">Corporate Bonds</div>
<div class="t" style="top:654.67px;font-size:7.6px;color:#333;letter-spacing:0.015px;left:920.60px;">Cash (Uninvested)</div>
<div class="t" style="top:667.07px;font-size:7.6px;color:#333;letter-spacing:0.066px;left:919.00px;">Alternatives</div>
<div class="t" style="top:664.77px;font-size:7.6px;color:#333;letter-spacing:-0.104px;left:803.30px;">Equity</div>
<div class="b" style="left:1246.2px;top:26.5px;width:2.0px;height:45.5px;background:rgba(170,195,225,0.9);border-radius:1px 1px 0 0"></div>
<div class="b" style="left:1246.2px;top:72px;width:2.0px;height:464.6px;background:rgba(110,110,110,0.85);border-radius:0 0 1px 1px"></div>
</div>
</body></html>
